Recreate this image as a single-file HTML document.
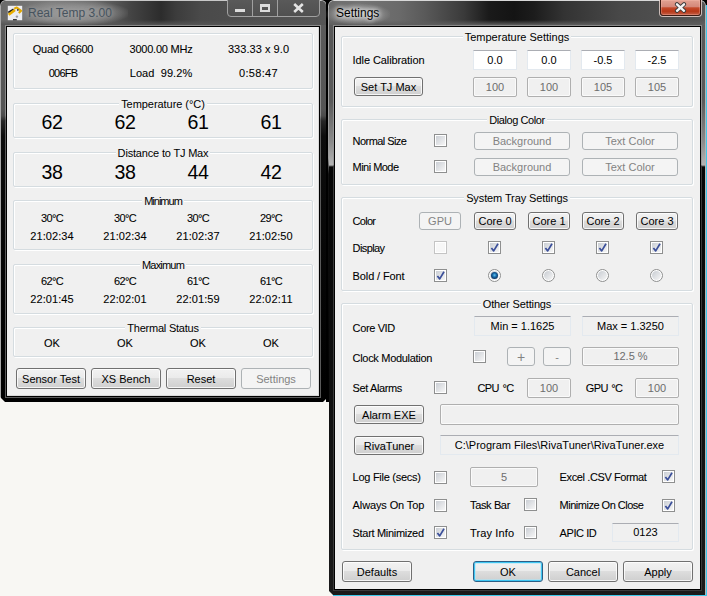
<!DOCTYPE html><html><head><meta charset="utf-8"><style>
*{box-sizing:border-box}
html,body{margin:0;padding:0}
body{width:707px;height:596px;position:relative;overflow:hidden;background:#f8f7f3;font-family:"Liberation Sans",sans-serif;font-size:11px;color:#000}
div{position:absolute}
.t{white-space:pre;line-height:13px;-webkit-text-stroke:0.08px #000}
.gb{border:1px solid #d5dce0;border-radius:2px;box-shadow:inset 1px 1px 0 #fff,1px 1px 0 #fff}
.gbt{text-align:center;line-height:13px;white-space:pre}
.gbt span{background:#f0f0f0;padding:0 2px}
.btn{border:1px solid #707070;border-radius:3px;background:linear-gradient(#f2f2f2 0%,#ebebeb 45%,#dddddd 50%,#cfcfcf 100%);box-shadow:inset 0 0 0 1px rgba(255,255,255,.8);text-align:center;white-space:pre}
.btn.dis{border-color:#adb2b5;background:#f4f4f4;color:#838383;box-shadow:none}
.btn.def{border-color:#2c5f86;box-shadow:inset 0 0 0 1px #3fc6f2, inset 0 0 0 2px rgba(170,230,250,.55)}
.ed{background:#fff;border:1px solid #e3e9ef;border-top-color:#abadb3;text-align:center;white-space:pre}
.ed.ro{background:#f0f0f0}
.ed.dis{background:#f0f0f0;border:1px solid #afafaf;border-radius:2px;color:#6d6d6d;box-shadow:inset 0 0 0 1px #fafafa}
.cb{width:13px;height:13px;border:1px solid #8e8f8f;background:#fff}
.cb:after{content:"";position:absolute;left:1px;top:1px;width:9px;height:9px;background:linear-gradient(135deg,#cbcfd5,#f6f6f6)}
.cb.dis{border-color:#c4c4c4}
.cb.dis:after{background:#f7f7f7}
.cb.on svg{position:absolute;left:1px;top:0px;z-index:2}
.rd{width:13px;height:13px;border-radius:50%;border:1px solid #8e8f8f;background:#fff}
.rd:after{content:"";position:absolute;left:1px;top:1px;width:9px;height:9px;border-radius:50%;background:linear-gradient(135deg,#c8ccd2,#f6f6f6)}
.rd.on:before{content:"";position:absolute;left:2px;top:2px;width:7px;height:7px;border-radius:50%;background:radial-gradient(circle at 50% 45%,#62c4f0 0%,#1a6fae 35%,#0d3664 70%,#0a2238 100%);z-index:2}
.big{font-size:19.6px;line-height:22px;letter-spacing:-0.3px;white-space:pre;text-align:center;width:60px}
</style></head><body>

<div style="left:0;top:0;width:707px;height:8px;background:#000"></div>
<div style="left:0;top:0;width:327px;height:402px;border-radius:6px 6px 0 0;background:linear-gradient(#5c5c5c 0px,#555 108px,#4a4a4a 115px,#262626 120px,#0c0c0c 135px,#000 402px);border:1px solid #a8a8a8;border-top-color:#c8c8c8;border-bottom:0"></div>
<div style="left:1px;top:1px;width:325px;height:24px;border-radius:5px 5px 0 0;background:linear-gradient(to right,#6a6a6a 0px,#7c7c7c 50px,#6a6a6a 95px,#444 130px,#2c2c2c 160px,#3c3c3c 175px,#4a4a4a 200px,#505050 260px,#555 325px)"></div>
<div style="left:1px;top:20px;width:325px;height:5px;background:linear-gradient(rgba(85,85,85,0),#555)"></div>
<div style="left:18px;top:1px;width:110px;height:24px;background:radial-gradient(ellipse 58px 13px at 50% 50%,rgba(160,160,160,.95) 0%,rgba(150,150,150,.75) 55%,rgba(120,120,120,0) 100%)"></div>
<div style="left:28px;top:6px;font-size:12px;line-height:14px;color:#46535e;white-space:pre;text-shadow:0 0 4px #a0a0a0">Real Temp 3.00</div>
<svg style="position:absolute;left:7px;top:5px" width="16" height="16" viewBox="0 0 16 16"><rect x="0.8" y="0.8" width="14.4" height="14.4" fill="#ececf0"/><path d="M1.3 7.4 L6.6 4.2" stroke="#1c1c1c" stroke-width="1.8"/><path d="M1.6 9.8 L8 5" stroke="#e8ad00" stroke-width="2.6"/><path d="M7.2 3.6 L9.8 2.5 L14.1 5.8 L11.8 8.1" fill="none" stroke="#e2a800" stroke-width="2.1" stroke-linejoin="round"/><circle cx="10.8" cy="4.9" r="0.9" fill="#3a3a3a"/><circle cx="9.9" cy="11.6" r="1.2" fill="#9a9aa0"/><rect x="6" y="14.2" width="3.8" height="1.1" fill="#111"/></svg>
<div style="left:227px;top:-2px;width:93px;height:19px;border:1px solid #a0a0a0;border-radius:0 0 4px 4px;background:linear-gradient(#5a5a5a,#505050)"></div>
<div style="left:252px;top:0;width:1px;height:16px;background:#a0a0a0"></div>
<div style="left:277px;top:0;width:1px;height:16px;background:#a0a0a0"></div>
<div style="left:235px;top:9px;width:10px;height:3px;background:#dcdcdc"></div>
<div style="left:260px;top:4px;width:10px;height:8px;border:2px solid #dcdcdc;border-top-width:3px"></div>
<svg style="position:absolute;left:293px;top:3px" width="11" height="10" viewBox="0 0 11 10"><path d="M1.2 1 L9.8 9 M9.8 1 L1.2 9" stroke="#e4e4e4" stroke-width="2.6"/></svg>
<div style="left:5px;top:25px;width:316px;height:373px;background:linear-gradient(#8a8a8a 0px,#8a8a8a 90px,#5a5a5a 95px,#5a5a5a 373px)"></div>
<div style="left:6px;top:26px;width:314px;height:371px;background:#000"></div>
<div style="left:7px;top:27px;width:312px;height:369px;background:#f0f0f0;border-right:1px solid #d8d8d8;border-bottom:1px solid #d8d8d8"></div>
<svg style="position:absolute;left:0;top:397px" width="6" height="5"><path d="M0 0 L0 5 L5 5Z" fill="#f8f7f3"/></svg>
<svg style="position:absolute;left:321px;top:397px" width="7" height="5"><path d="M7 0 L7 5 L2 5Z" fill="#f8f7f3"/></svg>
<div class="gb" style="left:13px;top:33px;width:300px;height:56px"></div>
<div class="t" style="left:-37px;top:42.7px;width:200px;text-align:center;letter-spacing:-0.256px;">Quad Q6600</div>
<div class="t" style="left:61px;top:42.7px;width:200px;text-align:center;letter-spacing:-0.230px;">3000.00 MHz</div>
<div class="t" style="left:158.5px;top:42.7px;width:200px;text-align:center;letter-spacing:0.045px;">333.33 x 9.0</div>
<div class="t" style="left:-37px;top:66.7px;width:200px;text-align:center;letter-spacing:-0.800px;">006FB</div>
<div class="t" style="left:61px;top:66.7px;width:200px;text-align:center;letter-spacing:0.070px;">Load  99.2%</div>
<div class="t" style="left:158.5px;top:66.7px;width:200px;text-align:center;letter-spacing:0.333px;">0:58:47</div>
<div class="gb" style="left:13px;top:103px;width:300px;height:35px"></div>
<div class="gbt" style="left:13.0px;top:98px;width:300px"><span style="letter-spacing:-0.047px;">Temperature (°C)</span></div>
<div class="big" style="left:22px;top:110.9px">62</div>
<div class="big" style="left:95px;top:110.9px">62</div>
<div class="big" style="left:168px;top:110.9px">61</div>
<div class="big" style="left:241px;top:110.9px">61</div>
<div class="gb" style="left:13px;top:152px;width:300px;height:35px"></div>
<div class="gbt" style="left:13.0px;top:147px;width:300px"><span style="letter-spacing:-0.176px;">Distance to TJ Max</span></div>
<div class="big" style="left:22px;top:160.7px">38</div>
<div class="big" style="left:95px;top:160.7px">38</div>
<div class="big" style="left:168px;top:160.7px">44</div>
<div class="big" style="left:241px;top:160.7px">42</div>
<div class="gb" style="left:13px;top:200px;width:300px;height:50px"></div>
<div class="gbt" style="left:13.0px;top:195px;width:300px"><span style="letter-spacing:-0.983px;">Minimum</span></div>
<div class="t" style="left:-48px;top:211.7px;width:200px;text-align:center;letter-spacing:-0.667px;">30°C</div>
<div class="t" style="left:25px;top:211.7px;width:200px;text-align:center;letter-spacing:-0.667px;">30°C</div>
<div class="t" style="left:98px;top:211.7px;width:200px;text-align:center;letter-spacing:-0.667px;">30°C</div>
<div class="t" style="left:171px;top:211.7px;width:200px;text-align:center;letter-spacing:-0.667px;">29°C</div>
<div class="t" style="left:-48px;top:229.9px;width:200px;text-align:center;letter-spacing:0.071px;">21:02:34</div>
<div class="t" style="left:25px;top:229.9px;width:200px;text-align:center;letter-spacing:0.071px;">21:02:34</div>
<div class="t" style="left:98px;top:229.9px;width:200px;text-align:center;letter-spacing:0.071px;">21:02:37</div>
<div class="t" style="left:171px;top:229.9px;width:200px;text-align:center;letter-spacing:0.071px;">21:02:50</div>
<div class="gb" style="left:13px;top:264px;width:300px;height:50px"></div>
<div class="gbt" style="left:13.0px;top:259px;width:300px"><span style="letter-spacing:-0.800px;">Maximum</span></div>
<div class="t" style="left:-48px;top:274.7px;width:200px;text-align:center;letter-spacing:-0.667px;">62°C</div>
<div class="t" style="left:25px;top:274.7px;width:200px;text-align:center;letter-spacing:-0.667px;">62°C</div>
<div class="t" style="left:98px;top:274.7px;width:200px;text-align:center;letter-spacing:-0.667px;">61°C</div>
<div class="t" style="left:171px;top:274.7px;width:200px;text-align:center;letter-spacing:-0.667px;">61°C</div>
<div class="t" style="left:-48px;top:292.9px;width:200px;text-align:center;letter-spacing:0.071px;">22:01:45</div>
<div class="t" style="left:25px;top:292.9px;width:200px;text-align:center;letter-spacing:0.071px;">22:02:01</div>
<div class="t" style="left:98px;top:292.9px;width:200px;text-align:center;letter-spacing:0.071px;">22:01:59</div>
<div class="t" style="left:171px;top:292.9px;width:200px;text-align:center;letter-spacing:0.214px;">22:02:11</div>
<div class="gb" style="left:13px;top:327px;width:300px;height:30px"></div>
<div class="gbt" style="left:13.0px;top:322px;width:300px"><span style="letter-spacing:-0.223px;">Thermal Status</span></div>
<div class="t" style="left:-48px;top:336.7px;width:200px;text-align:center;">OK</div>
<div class="t" style="left:25px;top:336.7px;width:200px;text-align:center;">OK</div>
<div class="t" style="left:98px;top:336.7px;width:200px;text-align:center;">OK</div>
<div class="t" style="left:171px;top:336.7px;width:200px;text-align:center;">OK</div>
<div class="btn" style="left:16px;top:368px;width:70px;height:21px;line-height:21px;">Sensor Test</div>
<div class="btn" style="left:91px;top:368px;width:70px;height:21px;line-height:21px;">XS Bench</div>
<div class="btn" style="left:166px;top:368px;width:70px;height:21px;line-height:21px;">Reset</div>
<div class="btn dis" style="left:241px;top:368px;width:70px;height:21px;line-height:21px;">Settings</div>
<div style="left:326px;top:0;width:2px;height:402px;background:#000"></div>
<div style="left:328px;top:0;width:378px;height:596px;border-radius:6px 6px 0 0;background:linear-gradient(#5e5e5e 0px,#585858 40px,#5a5a5a 100px,#8a8a8a 140px,#b4b4b4 164px,#050505 166px,#101010 400px,#1a1a1a 596px);border:1px solid #b4b4b4;border-top-color:#d8d8d8;border-bottom:0"></div>
<div style="left:328px;top:8px;width:1px;height:588px;background:linear-gradient(#a8a8a8 0px,#9a9a9a 150px,#111 166px,#000 394px,#f8f7f3 394px)"></div>
<svg style="position:absolute;left:328px;top:590px" width="6" height="6"><path d="M0 0 L0 6 L6 6Z" fill="#f8f7f3"/></svg>
<div style="left:329px;top:1px;width:376px;height:24px;border-radius:5px 5px 0 0;background:linear-gradient(to right,#6a6a6a 0px,#747474 30px,#6a6a6a 70px,#5a5a5a 95px,#3a3a3a 135px,#1a1a1a 160px,#141414 185px,#1c1c1c 205px,#333 235px,#484848 290px,#555 376px)"></div>
<div style="left:329px;top:20px;width:376px;height:5px;background:linear-gradient(rgba(94,94,94,0),#5e5e5e)"></div>
<div style="left:706px;top:5px;width:1px;height:591px;background:#3cc8ea"></div>
<div style="left:333px;top:595px;width:374px;height:1px;background:#3cc8ea"></div>
<div style="left:326px;top:1px;width:64px;height:24px;background:radial-gradient(ellipse 34px 11px at 50% 55%,rgba(190,190,190,.8) 0%,rgba(170,170,170,.55) 55%,rgba(120,120,120,0) 100%)"></div>
<div style="left:336px;top:6px;font-size:12px;line-height:14px;color:#000;white-space:pre;text-shadow:0 0 6px #fff,0 0 4px #eee">Settings</div>
<div style="left:660px;top:-1px;width:41px;height:17px;border:1px solid #3c1a12;border-radius:0 0 3px 3px;background:linear-gradient(#e2a292 0%,#d4887a 45%,#c44a2c 52%,#b83818 75%,#c46048 100%);box-shadow:inset 0 0 0 1px rgba(255,200,185,.3),0 0 0 1px rgba(235,215,210,.8)"></div>
<svg style="position:absolute;left:673.5px;top:2px" width="13" height="11" viewBox="0 0 13 11"><path d="M3 2.3 L10 8.8 M10 2.3 L3 8.8" stroke="#3a3a3a" stroke-width="4.2" stroke-linecap="round"/><path d="M3 2.3 L10 8.8 M10 2.3 L3 8.8" stroke="#f4f4f4" stroke-width="2.4" stroke-linecap="round"/></svg>
<div style="left:333px;top:25px;width:369px;height:566px;background:linear-gradient(#8a8a8a 0px,#9a9a9a 140px,#3a3a3a 141px,#3a3a3a 567px)"></div>
<div style="left:334px;top:26px;width:367px;height:564px;background:#000"></div>
<div style="left:335px;top:27px;width:365px;height:562px;background:#f0f0f0"></div>
<div class="gb" style="left:341px;top:36px;width:352px;height:71px"></div>
<div class="gbt" style="left:367.0px;top:31px;width:300px"><span style="letter-spacing:0.000px;">Temperature Settings</span></div>
<div class="t" style="left:352.6px;top:54.2px;letter-spacing:-0.093px;">Idle Calibration</div>
<div class="ed" style="left:473px;top:50px;width:44px;height:20px;line-height:18px;">0.0</div>
<div class="ed" style="left:527px;top:50px;width:44px;height:20px;line-height:18px;">0.0</div>
<div class="ed" style="left:581px;top:50px;width:44px;height:20px;line-height:18px;">-0.5</div>
<div class="ed" style="left:635px;top:50px;width:44px;height:20px;line-height:18px;">-2.5</div>
<div class="btn" style="left:354px;top:77px;width:69px;height:19px;line-height:19px;">Set TJ Max</div>
<div class="ed dis" style="left:473px;top:77px;width:44px;height:20px;line-height:18px;">100</div>
<div class="ed dis" style="left:527px;top:77px;width:44px;height:20px;line-height:18px;">100</div>
<div class="ed dis" style="left:581px;top:77px;width:44px;height:20px;line-height:18px;">105</div>
<div class="ed dis" style="left:635px;top:77px;width:44px;height:20px;line-height:18px;">105</div>
<div class="gb" style="left:341px;top:119px;width:352px;height:66px"></div>
<div class="gbt" style="left:367.0px;top:114px;width:300px"><span style="letter-spacing:-0.418px;">Dialog Color</span></div>
<div class="t" style="left:352.6px;top:135.0px;letter-spacing:-0.560px;">Normal Size</div>
<div class="cb off" style="left:434px;top:134px"></div>
<div class="btn dis" style="left:474px;top:132px;width:96px;height:18px;line-height:16px;">Background</div>
<div class="btn dis" style="left:582px;top:132px;width:96px;height:18px;line-height:16px;">Text Color</div>
<div class="t" style="left:352.6px;top:161.0px;letter-spacing:-0.538px;">Mini Mode</div>
<div class="cb off" style="left:434px;top:160px"></div>
<div class="btn dis" style="left:474px;top:158px;width:96px;height:18px;line-height:16px;">Background</div>
<div class="btn dis" style="left:582px;top:158px;width:96px;height:18px;line-height:16px;">Text Color</div>
<div class="gb" style="left:341px;top:197px;width:352px;height:94px"></div>
<div class="gbt" style="left:367.0px;top:192px;width:300px"><span style="letter-spacing:-0.111px;">System Tray Settings</span></div>
<div class="t" style="left:352.6px;top:215.0px;letter-spacing:-0.725px;">Color</div>
<div class="btn dis" style="left:419px;top:212px;width:42px;height:18px;line-height:16px;">GPU</div>
<div class="btn" style="left:474px;top:212px;width:42px;height:18px;line-height:16px;">Core 0</div>
<div class="btn" style="left:528px;top:212px;width:42px;height:18px;line-height:16px;">Core 1</div>
<div class="btn" style="left:582px;top:212px;width:42px;height:18px;line-height:16px;">Core 2</div>
<div class="btn" style="left:636px;top:212px;width:42px;height:18px;line-height:16px;">Core 3</div>
<div class="t" style="left:352.6px;top:242.1px;letter-spacing:-0.600px;">Display</div>
<div class="cb dis" style="left:434px;top:241px"></div>
<div class="cb on" style="left:488px;top:241px"><svg width="11" height="12" viewBox="0 0 11 12"><path d="M1.4 6 L3.7 8.9 L8 1.8" fill="none" stroke="#3b4f9a" stroke-width="1.7" stroke-linejoin="round"/></svg></div>
<div class="cb on" style="left:542px;top:241px"><svg width="11" height="12" viewBox="0 0 11 12"><path d="M1.4 6 L3.7 8.9 L8 1.8" fill="none" stroke="#3b4f9a" stroke-width="1.7" stroke-linejoin="round"/></svg></div>
<div class="cb on" style="left:596px;top:241px"><svg width="11" height="12" viewBox="0 0 11 12"><path d="M1.4 6 L3.7 8.9 L8 1.8" fill="none" stroke="#3b4f9a" stroke-width="1.7" stroke-linejoin="round"/></svg></div>
<div class="cb on" style="left:650px;top:241px"><svg width="11" height="12" viewBox="0 0 11 12"><path d="M1.4 6 L3.7 8.9 L8 1.8" fill="none" stroke="#3b4f9a" stroke-width="1.7" stroke-linejoin="round"/></svg></div>
<div class="t" style="left:352.6px;top:270.2px;letter-spacing:-0.120px;">Bold / Font</div>
<div class="cb on" style="left:434px;top:269px"><svg width="11" height="12" viewBox="0 0 11 12"><path d="M1.4 6 L3.7 8.9 L8 1.8" fill="none" stroke="#3b4f9a" stroke-width="1.7" stroke-linejoin="round"/></svg></div>
<div class="rd on" style="left:487.5px;top:269.0px"></div>
<div class="rd" style="left:541.5px;top:269.0px"></div>
<div class="rd" style="left:595.5px;top:269.0px"></div>
<div class="rd" style="left:649.5px;top:269.0px"></div>
<div class="gb" style="left:341px;top:303px;width:352px;height:247px"></div>
<div class="gbt" style="left:367.0px;top:298px;width:300px"><span style="letter-spacing:-0.131px;">Other Settings</span></div>
<div class="t" style="left:352.6px;top:322.4px;letter-spacing:-0.371px;">Core VID</div>
<div class="ed ro" style="left:474px;top:316px;width:97px;height:20px;line-height:18px;">Min = 1.1625</div>
<div class="ed ro" style="left:582px;top:316px;width:97px;height:20px;line-height:18px;">Max = 1.3250</div>
<div class="t" style="left:352.6px;top:352.2px;letter-spacing:-0.307px;">Clock Modulation</div>
<div class="cb off" style="left:473px;top:350px"></div>
<div class="btn dis" style="left:507px;top:347px;width:28px;height:19px;line-height:19px;font-size:14px;">+</div>
<div class="btn dis" style="left:543px;top:347px;width:28px;height:19px;line-height:19px;">-</div>
<div class="ed dis" style="left:582px;top:347px;width:97px;height:19px;line-height:17px;">12.5 %</div>
<div class="t" style="left:352.6px;top:382.2px;letter-spacing:-0.400px;">Set Alarms</div>
<div class="cb off" style="left:434px;top:381px"></div>
<div class="t" style="left:477.5px;top:382.2px;word-spacing:1px;letter-spacing:-0.6px;">CPU °C</div>
<div class="ed dis" style="left:527px;top:378px;width:44px;height:20px;line-height:18px;">100</div>
<div class="t" style="left:585.7px;top:382.2px;word-spacing:1px;letter-spacing:-0.6px;">GPU °C</div>
<div class="ed dis" style="left:635px;top:378px;width:44px;height:20px;line-height:18px;">100</div>
<div class="btn" style="left:354px;top:405px;width:70px;height:19px;line-height:19px;">Alarm EXE</div>
<div class="ed dis" style="left:440px;top:404px;width:239px;height:21px;line-height:19px;"></div>
<div class="btn" style="left:354px;top:436px;width:70px;height:19px;line-height:19px;">RivaTuner</div>
<div class="ed ro" style="left:440px;top:435px;width:239px;height:20px;line-height:18px;">C:\Program Files\RivaTuner\RivaTuner.exe</div>
<div class="t" style="left:352.6px;top:470.7px;letter-spacing:-0.271px;">Log File (secs)</div>
<div class="cb off" style="left:434px;top:471px"></div>
<div class="ed dis" style="left:470px;top:467px;width:68px;height:20px;line-height:18px;">5</div>
<div class="t" style="left:559.6px;top:470.9px;letter-spacing:-0.388px;">Excel .CSV Format</div>
<div class="cb on" style="left:662px;top:470px"><svg width="11" height="12" viewBox="0 0 11 12"><path d="M1.4 6 L3.7 8.9 L8 1.8" fill="none" stroke="#3b4f9a" stroke-width="1.7" stroke-linejoin="round"/></svg></div>
<div class="t" style="left:352.6px;top:498.9px;letter-spacing:-0.117px;">Always On Top</div>
<div class="cb off" style="left:434px;top:499px"></div>
<div class="t" style="left:470px;top:498.9px;letter-spacing:-0.357px;">Task Bar</div>
<div class="cb off" style="left:524px;top:498px"></div>
<div class="t" style="left:559.6px;top:498.9px;letter-spacing:-0.494px;">Minimize On Close</div>
<div class="cb on" style="left:662px;top:499px"><svg width="11" height="12" viewBox="0 0 11 12"><path d="M1.4 6 L3.7 8.9 L8 1.8" fill="none" stroke="#3b4f9a" stroke-width="1.7" stroke-linejoin="round"/></svg></div>
<div class="t" style="left:352.6px;top:526.9px;letter-spacing:-0.314px;">Start Minimized</div>
<div class="cb on" style="left:434px;top:526px"><svg width="11" height="12" viewBox="0 0 11 12"><path d="M1.4 6 L3.7 8.9 L8 1.8" fill="none" stroke="#3b4f9a" stroke-width="1.7" stroke-linejoin="round"/></svg></div>
<div class="t" style="left:470px;top:526.9px;letter-spacing:0.125px;">Tray Info</div>
<div class="cb off" style="left:524px;top:526px"></div>
<div class="t" style="left:559.6px;top:526.9px;letter-spacing:-0.433px;">APIC ID</div>
<div class="ed ro" style="left:612px;top:523px;width:67px;height:19px;line-height:17px;">0123</div>
<div class="btn" style="left:342px;top:561px;width:70px;height:21px;line-height:21px;">Defaults</div>
<div class="btn def" style="left:473px;top:561px;width:70px;height:21px;line-height:21px;">OK</div>
<div class="btn" style="left:548px;top:561px;width:70px;height:21px;line-height:21px;">Cancel</div>
<div class="btn" style="left:623px;top:561px;width:70px;height:21px;line-height:21px;">Apply</div>
</body></html>
